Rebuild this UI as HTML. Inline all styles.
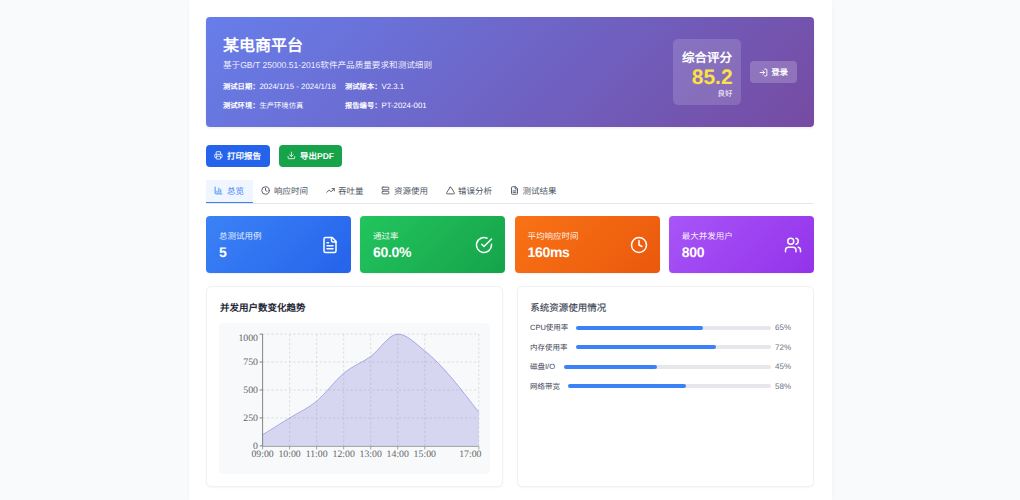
<!DOCTYPE html>
<html lang="zh-CN"><head><meta charset="utf-8">
<style>
*{box-sizing:border-box;margin:0;padding:0}
html,body{width:1020px;height:500px;overflow:hidden}
body{position:relative;text-rendering:geometricPrecision;background:#f9fafb;font-family:"Liberation Sans",sans-serif;color:#1f2937}
.a{position:absolute;white-space:nowrap}
.wrap{position:absolute;left:188.6px;top:0;width:643px;height:500px;background:#fff;box-shadow:0 0 4px rgba(0,0,0,.04)}
.hdr{left:206px;top:17px;width:608px;height:110px;border-radius:4px;background:linear-gradient(135deg,#667eea 0%,#764ba2 100%);box-shadow:0 1px 3px rgba(0,0,0,.08)}
.w{color:#fff}
.title{left:223px;top:36.5px;font-size:16px;font-weight:bold;line-height:20px}
.sub{left:223px;top:59px;font-size:8.6px;line-height:13px;color:rgba(255,255,255,.9)}
.meta{font-size:7.3px;line-height:10px;color:#fff}
.meta b{font-weight:bold}.meta i{font-style:normal;font-size:7.8px}
.score{left:673px;top:39px;width:68px;height:66px;border-radius:5px;background:rgba(255,255,255,.15)}
.sl{right:288px;top:50px;font-size:12.5px;font-weight:bold;line-height:16px;color:#fff}
.sv{right:287.4px;top:64.5px;font-size:21px;font-weight:bold;color:#fde047;line-height:26px}
.sg{right:287.6px;top:88.5px;font-size:7.5px;line-height:10px;color:#fff}
.login{left:750px;top:61px;width:47px;height:22px;border-radius:4px;background:rgba(255,255,255,.2)}
.btn{top:145px;height:22px;border-radius:4px}
.bt{top:149.8px;font-size:8.5px;font-weight:bold;line-height:12px;color:#fff}
.tab{top:185px;font-size:8.5px;line-height:12px;color:#4b5563}
.card{top:216.3px;height:56.4px;width:145.3px;border-radius:4px;box-shadow:0 1px 2px rgba(0,0,0,.06)}
.cl{top:230.4px;font-size:8.5px;line-height:12px;color:rgba(255,255,255,.92)}
.cv{top:243px;font-size:14px;letter-spacing:-0.3px;font-weight:bold;line-height:18px;color:#fff}
.panel{top:285.6px;height:201px;width:297.4px;border:1px solid #f0f1f4;border-radius:5px;background:#fff;box-shadow:0 1px 2px rgba(0,0,0,.04)}
.pt{top:302px;font-size:9.5px;font-weight:bold;line-height:14px;color:#1f2937}
.rl{font-size:7.5px;line-height:10px;margin-top:0.7px;color:#374151}
.track{height:4px;border-radius:2px;background:#e5e7eb}
.fill{height:4px;border-radius:2px;background:#3b82f6}
.pc{font-size:8px;line-height:10px;margin-top:0.8px;color:#6b7280}
svg.i{position:absolute;fill:none;stroke-linecap:round;stroke-linejoin:round}
</style></head>
<body>
<div class="wrap"></div>

<!-- header -->
<div class="a hdr"></div>
<div class="a title w">某电商平台</div>
<div class="a sub">基于GB/T 25000.51-2016软件产品质量要求和测试细则</div>
<div class="a meta" style="left:223px;top:82px"><b>测试日期：</b><i>2024/1/15 - 2024/1/18</i></div>
<div class="a meta" style="left:345px;top:82px"><b>测试版本：</b><i>V2.3.1</i></div>
<div class="a meta" style="left:223px;top:101px"><b>测试环境：</b>生产环境仿真</div>
<div class="a meta" style="left:345px;top:101px"><b>报告编号：</b><i>PT-2024-001</i></div>
<div class="a score"></div>
<div class="a sl">综合评分</div>
<div class="a sv">85.2</div>
<div class="a sg">良好</div>
<div class="a login"></div>
<svg class="i" style="left:759px;top:68px" width="9" height="9" viewBox="0 0 24 24" stroke="#fff" stroke-width="2.4"><path d="M15 3h4a2 2 0 0 1 2 2v14a2 2 0 0 1-2 2h-4"/><path d="M10 17l5-5-5-5"/><path d="M15 12H3"/></svg>
<div class="a bt" style="left:771.5px;top:67px;font-size:8.2px">登录</div>

<!-- buttons -->
<div class="a btn" style="left:206px;width:64px;background:#2563eb"></div>
<svg class="i" style="left:214.3px;top:151.3px" width="8.8" height="8.8" viewBox="0 0 24 24" stroke="#fff" stroke-width="2.3"><path d="M6 9V3a1 1 0 0 1 1-1h10a1 1 0 0 1 1 1v6"/><path d="M6 18H4a2 2 0 0 1-2-2v-5a2 2 0 0 1 2-2h16a2 2 0 0 1 2 2v5a2 2 0 0 1-2 2h-2"/><rect x="6" y="14" width="12" height="8" rx="1"/></svg>
<div class="a bt" style="left:227px">打印报告</div>
<div class="a btn" style="left:279px;width:63px;background:#16a34a"></div>
<svg class="i" style="left:287.2px;top:151.3px" width="8.8" height="8.8" viewBox="0 0 24 24" stroke="#fff" stroke-width="2.2"><path d="M21 15v4a2 2 0 0 1-2 2H5a2 2 0 0 1-2-2v-4"/><path d="M7 10l5 5 5-5"/><path d="M12 15V3"/></svg>
<div class="a bt" style="left:300px">导出PDF</div>

<!-- tabs -->
<div class="a" style="left:206px;top:203px;width:608px;height:1px;background:#e5e7eb"></div>
<div class="a" style="left:206px;top:179.5px;width:47px;height:23.5px;background:#eff6ff;border-bottom:1.5px solid #3b82f6"></div>
<svg class="i" style="left:214.1px;top:186.4px" width="9" height="9" viewBox="0 0 24 24" stroke="#3b82f6" stroke-width="2.4"><path d="M3 3v16a2 2 0 0 0 2 2h16"/><path d="M8 17v-3"/><path d="M13 17V6"/><path d="M18 17V10"/></svg>
<div class="a tab" style="left:227px;color:#3b82f6">总览</div>
<svg class="i" style="left:261px;top:186.4px" width="9" height="9" viewBox="0 0 24 24" stroke="#4b5563" stroke-width="2.4"><circle cx="12" cy="12" r="10"/><path d="M12 6v6l4 2"/></svg>
<div class="a tab" style="left:274px">响应时间</div>
<svg class="i" style="left:325.5px;top:186.4px" width="9" height="9" viewBox="0 0 24 24" stroke="#4b5563" stroke-width="2.4"><path d="M22 7l-8.5 8.5-5-5L2 17"/><path d="M16 7h6v6"/></svg>
<div class="a tab" style="left:338px">吞吐量</div>
<svg class="i" style="left:381px;top:186.4px" width="9" height="9" viewBox="0 0 24 24" stroke="#4b5563" stroke-width="2.4"><rect x="3" y="3" width="18" height="7" rx="2"/><rect x="3" y="14" width="18" height="7" rx="2"/></svg>
<div class="a tab" style="left:394px">资源使用</div>
<svg class="i" style="left:446px;top:186.4px" width="9" height="9" viewBox="0 0 24 24" stroke="#4b5563" stroke-width="2.4"><path d="M10.3 3.9L1.8 18a2 2 0 0 0 1.7 3h17a2 2 0 0 0 1.7-3L13.7 3.9a2 2 0 0 0-3.4 0z"/></svg>
<div class="a tab" style="left:458px">错误分析</div>
<svg class="i" style="left:510px;top:186.4px" width="9" height="9" viewBox="0 0 24 24" stroke="#4b5563" stroke-width="2.4"><path d="M14 2H6a2 2 0 0 0-2 2v16a2 2 0 0 0 2 2h12a2 2 0 0 0 2-2V8z"/><path d="M14 2v6h6"/><path d="M16 13H8"/><path d="M16 17H8"/></svg>
<div class="a tab" style="left:522.5px">测试结果</div>

<!-- stat cards -->
<div class="a card" style="left:206px;background:linear-gradient(135deg,#3b82f6,#2563eb)"></div>
<div class="a cl" style="left:219px">总测试用例</div>
<div class="a cv" style="left:219px">5</div>
<svg class="i" style="left:321px;top:235.8px" width="18" height="18" viewBox="0 0 24 24" stroke="#fff" stroke-width="2"><path d="M15 2H6a2 2 0 0 0-2 2v16a2 2 0 0 0 2 2h12a2 2 0 0 0 2-2V7z"/><path d="M14 2v4a2 2 0 0 0 2 2h4"/><path d="M10 9H8"/><path d="M16 13H8"/><path d="M16 17H8"/></svg>

<div class="a card" style="left:360px;background:linear-gradient(135deg,#22c55e,#16a34a)"></div>
<div class="a cl" style="left:373px">通过率</div>
<div class="a cv" style="left:373px">60.0%</div>
<svg class="i" style="left:475.3px;top:235.8px" width="18" height="18" viewBox="0 0 24 24" stroke="#fff" stroke-width="2"><path d="M22 11.08V12a10 10 0 1 1-5.93-9.14"/><path d="M22 4L12 14.01l-3-3"/></svg>

<div class="a card" style="left:514.5px;background:linear-gradient(135deg,#f97316,#ea580c)"></div>
<div class="a cl" style="left:527.5px">平均响应时间</div>
<div class="a cv" style="left:527.5px">160ms</div>
<svg class="i" style="left:629.5px;top:235.8px" width="18" height="18" viewBox="0 0 24 24" stroke="#fff" stroke-width="2"><circle cx="12" cy="12" r="10"/><path d="M12 6v6l4 2"/></svg>

<div class="a card" style="left:668.7px;background:linear-gradient(135deg,#a855f7,#9333ea)"></div>
<div class="a cl" style="left:681.7px">最大并发用户</div>
<div class="a cv" style="left:681.7px">800</div>
<svg class="i" style="left:783.8px;top:235.8px" width="18" height="18" viewBox="0 0 24 24" stroke="#fff" stroke-width="2"><path d="M16 21v-2a4 4 0 0 0-4-4H6a4 4 0 0 0-4 4v2"/><circle cx="9" cy="7" r="4"/><path d="M22 21v-2a4 4 0 0 0-3-3.87"/><path d="M16 3.13a4 4 0 0 1 0 7.75"/></svg>

<!-- panels -->
<div class="a panel" style="left:206px"></div>
<div class="a pt" style="left:220px">并发用户数变化趋势</div>
<svg class="a" style="left:219px;top:323px" width="271" height="151" viewBox="0 0 271 151">
  <rect x="0" y="0" width="271" height="151" rx="4" fill="#f8f9fb"/>
  <g stroke="#d4d4d8" stroke-width="0.8" stroke-dasharray="2.2 2.2" fill="none">
    <path d="M43.6 11.1H259.84M43.6 39.05H259.84M43.6 67H259.84M43.6 94.95H259.84"/>
    <path d="M70.63 11.1V122.9M97.66 11.1V122.9M124.69 11.1V122.9M151.72 11.1V122.9M178.75 11.1V122.9M205.78 11.1V122.9M259.84 11.1V122.9"/>
  </g>
  <path d="M43.60 111.72 C52.61 106.13 61.62 100.54 70.63 94.95 C79.64 89.36 88.65 85.63 97.66 78.18 C106.67 70.73 115.68 57.68 124.69 50.23 C133.70 42.78 142.71 39.98 151.72 33.46 C160.73 26.94 169.74 11.10 178.75 11.10 C187.76 11.10 196.77 20.73 205.78 27.87 C223.80 42.16 241.82 65.76 259.84 89.36 L259.84 122.90 L43.60 122.90 Z" fill="#8884d8" fill-opacity="0.3"/>
  <path d="M43.60 111.72 C52.61 106.13 61.62 100.54 70.63 94.95 C79.64 89.36 88.65 85.63 97.66 78.18 C106.67 70.73 115.68 57.68 124.69 50.23 C133.70 42.78 142.71 39.98 151.72 33.46 C160.73 26.94 169.74 11.10 178.75 11.10 C187.76 11.10 196.77 20.73 205.78 27.87 C223.80 42.16 241.82 65.76 259.84 89.36" fill="none" stroke="#9894de" stroke-width="0.75"/>
  <g stroke="#777" stroke-width="0.9" fill="none">
    <path d="M43.6 11.1V123.4"/>
    <path d="M43.6 123.4H259.84" stroke="#8a8a8a" stroke-width="0.8"/>
    <path d="M40.6 11.1H43.6M40.6 39.05H43.6M40.6 67H43.6M40.6 94.95H43.6M40.6 122.9H43.6"/>
    <path stroke="#999" d="M43.6 123.4v3M70.63 123.4v3M97.66 123.4v3M124.69 123.4v3M151.72 123.4v3M178.75 123.4v3M205.78 123.4v3M259.84 123.4v3"/>
  </g>
  <g font-family="Liberation Serif" font-size="9.8" fill="#666" text-anchor="end">
    <text x="39" y="17.8">1000</text><text x="39" y="42.2">750</text><text x="39" y="70.2">500</text><text x="39" y="98.1">250</text><text x="39" y="126.1">0</text>
  </g>
  <g font-family="Liberation Serif" font-size="9.8" fill="#666" text-anchor="middle">
    <text x="43.6" y="133.8">09:00</text><text x="70.63" y="133.8">10:00</text><text x="97.66" y="133.8">11:00</text><text x="124.69" y="133.8">12:00</text><text x="151.72" y="133.8">13:00</text><text x="178.75" y="133.8">14:00</text><text x="205.78" y="133.8">15:00</text><text x="262.5" y="133.8" text-anchor="end">17:00</text>
  </g>
</svg>

<div class="a panel" style="left:516.6px"></div>
<div class="a pt" style="left:530.3px;font-weight:400;color:#374151;-webkit-text-stroke:0.15px #374151">系统资源使用情况</div>

<div class="a rl" style="left:530px;top:322.5px">CPU使用率</div>
<div class="a track" style="left:576px;top:325.5px;width:195px"><div class="fill" style="width:65%"></div></div>
<div class="a pc" style="left:775px;top:322.5px">65%</div>

<div class="a rl" style="left:530px;top:342.3px">内存使用率</div>
<div class="a track" style="left:576px;top:345.3px;width:195px"><div class="fill" style="width:72%"></div></div>
<div class="a pc" style="left:775px;top:342.3px">72%</div>

<div class="a rl" style="left:530px;top:361.7px">磁盘I/O</div>
<div class="a track" style="left:564px;top:364.7px;width:207px"><div class="fill" style="width:45%"></div></div>
<div class="a pc" style="left:775px;top:361.7px">45%</div>

<div class="a rl" style="left:530px;top:381px">网络带宽</div>
<div class="a track" style="left:568px;top:384px;width:203px"><div class="fill" style="width:58%"></div></div>
<div class="a pc" style="left:775px;top:381px">58%</div>

</body></html>
